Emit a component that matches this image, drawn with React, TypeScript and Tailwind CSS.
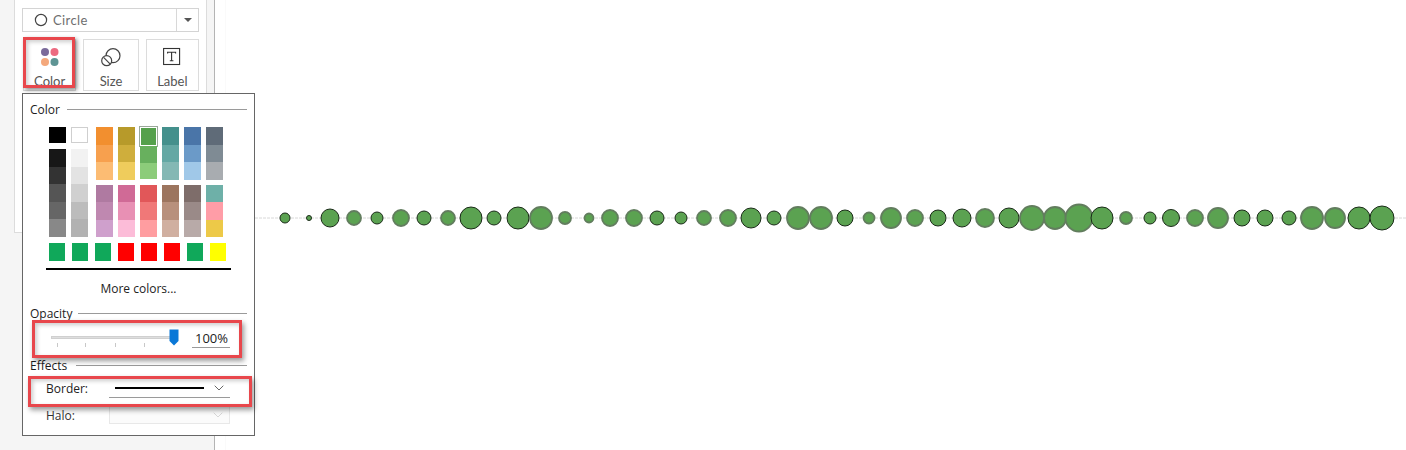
const font = "font-['Open_Sans','Noto_Sans',sans-serif]";

const dots: [number, number, 0 | 1][] = [
  [285, 10, 1], [309, 5, 1], [330, 18, 1], [354, 14, 0], [377, 12, 1], [401, 16, 0], [424, 14, 1], [448, 14, 0],
  [471, 22, 1], [494, 14, 1], [518, 22, 1], [541, 22, 0], [565, 12, 0], [589, 9, 0], [610, 16, 0], [634, 16, 0],
  [657, 14, 1], [681, 12, 1], [704, 14, 0], [728, 16, 0], [751, 20, 1], [774, 14, 1], [798, 22, 0], [821, 22, 0],
  [845, 16, 1], [869, 11, 0], [891, 20, 0], [915, 16, 0], [938, 16, 1], [962, 18, 1], [985, 18, 0], [1009, 20, 1],
  [1032, 24, 0], [1055, 22, 0], [1079, 27, 0], [1102, 22, 1], [1126, 12, 0], [1150, 12, 1], [1171, 17, 1], [1195, 16, 0],
  [1218, 20, 0], [1242, 16, 1], [1265, 16, 1], [1289, 14, 1], [1312, 22, 0], [1335, 20, 0], [1359, 22, 1], [1382, 24, 1],
];

const palette = [
  [["#f28f2f", "#f7a04e", "#fcbc73"], ["#af7aa1", "#bf88b0", "#cfa0cc"]],
  [["#b79a2a", "#cfae3c", "#efcc5c"], ["#d06a96", "#e890b4", "#fcbcd8"]],
  [["#55a04c", "#68b05e", "#8ccc7a"], ["#e15759", "#f07878", "#ff9da0"]],
  [["#44908c", "#64a8a4", "#84b8b4"], ["#9c755f", "#b8907c", "#d0afa0"]],
  [["#4a75a8", "#6b9ac8", "#a0c8e8"], ["#7e6d6a", "#9a8a88", "#b8aaa8"]],
  [["#5f6b78", "#7f8b94", "#a8acb0"], ["#6eb0a8", "#ff9da7", "#edc948"]],
];
const recent = ["#10a85a", "#10a85a", "#10a85a", "#ff0000", "#ff0000", "#ff0000", "#10a85a", "#ffff00"];
const blacks = ["#171717", "#333333", "#555555", "#666666", "#888888"];
const whites = ["#f2f2f2", "#e3e3e3", "#d0d0d0", "#bcbcbc", "#b2b2b2"];

function Stack({ colors, selected }: { colors: string[]; selected?: boolean }) {
  return (
    <div className="flex flex-col w-[17px] flex-1">
      {colors.map((c, i) => (
        <div
          key={i}
          className={selected && i === 0 ? "flex-1 border border-white outline outline-1 outline-[#9aa89a]" : "flex-1"}
          style={{ background: c }}
        />
      ))}
    </div>
  );
}

function Header({ label, gap }: { label: string; gap: string }) {
  return (
    <div className="flex items-center h-4 pl-[7px] pr-[7px]">
      <span className={`text-[12px] leading-4 pt-[1px] text-[#1c1c1c] ${gap}`}>{label}</span>
      <div className="flex-1 h-px bg-[#9a9a9a]" />
    </div>
  );
}

function Chevron({ color }: { color: string }) {
  return (
    <svg width="10" height="6" viewBox="0 0 10 6" fill="none" stroke={color} strokeWidth="1">
      <path d="M0.7 0.7l4.3 4.3 4.3-4.3" />
    </svg>
  );
}

function ToolButton({ label, children, className }: { label: string; children: React.ReactNode; className: string }) {
  return (
    <div className={`flex flex-col items-center h-[52px] border border-[#dcdcdc] bg-white ${className}`}>
      <div className="h-[33px] pt-[5px] flex items-start justify-center">{children}</div>
      <span className="text-[13px] leading-4 text-[#555]">{label}</span>
    </div>
  );
}

export default function App() {
  return (
    <div className={`relative flex w-[1406px] h-[450px] overflow-hidden bg-white ${font}`}>
      <aside className="w-[215px] h-full bg-[#f5f5f5] border-r border-[#b4b4b4] pl-[14px] pr-[7px] shrink-0">
        <div className="h-[233px] bg-white border-l border-b border-r border-[#dcdcdc] pl-[7px] pr-[7px] pt-2">
          <div className="flex items-center h-6 w-[177px] border border-[#d4d4d4] bg-white">
            <svg width="14" height="14" viewBox="0 0 14 14" className="ml-[11px]" fill="none" stroke="#444" strokeWidth="1.2">
              <circle cx="7" cy="7" r="5.6" />
            </svg>
            <span className="ml-[5px] pt-[1px] text-[13px] tracking-[0.4px] text-[#6e6e6e] flex-1 font-['Lato',sans-serif]">Circle</span>
            <div className="w-[22px] h-full border-l border-[#d8d8d8] flex items-center justify-center">
              <div className="w-0 h-0 border-l-[4px] border-r-[4px] border-t-[4px] border-l-transparent border-r-transparent border-t-[#555]" />
            </div>
          </div>
          <div className="flex mt-[7px] gap-[7px] font-['Lato',sans-serif]">
            <ToolButton label="Color" className="w-[54px] ml-[1px]">
              <svg width="24" height="24" viewBox="0 0 24 24">
                <circle cx="7" cy="7" r="4" fill="#7a6a9a" />
                <circle cx="16.5" cy="7" r="4" fill="#ec6a80" />
                <circle cx="7" cy="17" r="4" fill="#f4a87c" />
                <circle cx="16.5" cy="17" r="4" fill="#5e9494" />
              </svg>
            </ToolButton>
            <ToolButton label="Size" className="w-[56px]">
              <svg width="22" height="24" viewBox="0 0 22 24" fill="none" stroke="#444" strokeWidth="1.2">
                <circle cx="13" cy="10.7" r="7" />
                <circle cx="6.7" cy="15.7" r="5" fill="#fff" />
                <path d="M3.6 12.4l6.4 6.4" />
              </svg>
            </ToolButton>
            <ToolButton label="Label" className="w-[54px]">
              <svg width="18" height="24" viewBox="0 0 18 24" fill="none" stroke="#333" strokeWidth="1.1">
                <rect x="0.6" y="3.5" width="16" height="16" />
                <path d="M4.6 8.6V7.2h8v1.4M8.6 7.2v8.6M6.8 15.8h3.6" />
              </svg>
            </ToolButton>
          </div>
        </div>
      </aside>

      <main className="flex-1 h-full ml-[10px] border-l border-[#fafafa]">
        <svg width="1180" height="450" viewBox="226 0 1180 450" className="block">
          <line x1="255" y1="218" x2="1406" y2="218" stroke="#d8d8d8" strokeWidth="1" strokeDasharray="3 1" />
          {dots.map(([x, d, dark], i) => (
            <circle
              key={i}
              cx={x}
              cy={218}
              r={d / 2}
              fill="#5ba251"
              stroke={dark ? "#1a2a18" : "#627d5e"}
              strokeWidth={dark ? 1 : 1.8}
            />
          ))}
        </svg>
      </main>

      {/* Colour popup */}
      <div className="absolute left-[22px] top-[93px] w-[233px] h-[343px] bg-white border border-[#666] pt-[7px] text-[#222]">
        <Header label="Color" gap="mr-[7px]" />
        <div className="flex mt-[10px] pl-[26px] gap-[5px] h-[110px]">
          <div className="flex flex-col gap-[6px] w-[17px]">
            <div className="h-4 bg-black" />
            <Stack colors={blacks} />
          </div>
          <div className="flex flex-col gap-[6px] w-[17px]">
            <div className="h-4 bg-white border border-[#cfcfcf]" />
            <Stack colors={whites} />
          </div>
          <div className="flex gap-[5px] ml-[3px]">
            {palette.map((col, i) => (
              <div key={i} className="flex flex-col gap-[5px] w-[17px]">
                <Stack colors={col[0]} selected={i === 2} />
                <Stack colors={col[1]} />
              </div>
            ))}
          </div>
        </div>
        <div className="flex mt-[6px] pl-[26px] gap-[7px] h-[18px]">
          {recent.map((c, i) => (
            <div key={i} className="w-[16px] h-full" style={{ background: c }} />
          ))}
        </div>
        <div className="mt-[7px] ml-[23px] w-[185px] h-[2px] bg-black" />
        <div className="mt-[8px] h-5 pt-[1px] text-center text-[12px] leading-5 text-[#222]">More colors...</div>
        <div className="mt-[7px]">
          <Header label="Opacity" gap="mr-[6px]" />
        </div>
        <div className="flex items-start mt-[7px] h-5 pl-[28px]">
          <div className="relative w-[125px] h-5">
            <div className="absolute left-0 right-0 top-[8px] h-[3px] bg-[#dedede] border border-[#d0d0d0]" />
            <div className="absolute left-[6px] top-[15px] w-px h-[4px] bg-[#c8c8c8]" />
            <div className="absolute left-[34px] top-[15px] w-px h-[4px] bg-[#c8c8c8]" />
            <div className="absolute left-[64px] top-[15px] w-px h-[4px] bg-[#c8c8c8]" />
            <div className="absolute left-[93px] top-[15px] w-px h-[4px] bg-[#c8c8c8]" />
            <svg width="10" height="17" viewBox="0 0 10 17" className="absolute left-[118px] top-[1px]">
              <path d="M0.5 0.5h9v11.5l-4.5 4.5-4.5-4.5z" fill="#0a78d7" />
            </svg>
          </div>
          <div className="ml-[16px] w-[38px] h-5 border-b border-[#9a9a9a] text-[13px] leading-5 text-right pr-[2px] text-[#222]">
            100%
          </div>
        </div>
        <div className="mt-[9px]">
          <Header label="Effects" gap="mr-[9px]" />
        </div>
        <div className="flex items-center mt-[5px] h-5 pl-[23px]">
          <span className="w-[63px] pt-[2px] text-[12px] text-[#222]">Border:</span>
          <div className="flex items-center w-[121px] h-5 border-b border-[#9a9a9a] pl-[6px] pr-[6px]">
            <div className="w-[89px] h-[2px] bg-black" />
            <div className="ml-auto flex">
              <Chevron color="#666" />
            </div>
          </div>
        </div>
        <div className="flex items-center mt-[7px] h-[19px] pl-[23px]">
          <span className="w-[63px] pt-[2px] text-[12px] text-[#333]">Halo:</span>
          <div className="flex items-center justify-end w-[121px] h-[19px] border border-[#e8e8e8] bg-[#fbfbfb] pr-[6px]">
            <Chevron color="#d8d8d8" />
          </div>
        </div>
      </div>

      {/* Annotation highlights */}
      <div className="absolute left-[23px] top-[37px] w-[52px] h-[51px] border-[3px] border-[#e8474c] shadow-[2px_2px_4px_rgba(0,0,0,0.45),inset_2px_2px_4px_rgba(0,0,0,0.2)]" />
      <div className="absolute left-[32px] top-[320px] w-[210px] h-[38px] border-[3px] border-[#e8474c] shadow-[2px_3px_5px_rgba(0,0,0,0.4),inset_2px_2px_4px_rgba(0,0,0,0.2)]" />
      <div className="absolute left-[28px] top-[376px] w-[224px] h-[31px] border-[3px] border-[#e8474c] shadow-[2px_3px_5px_rgba(0,0,0,0.4),inset_2px_2px_4px_rgba(0,0,0,0.2)]" />
    </div>
  );
}
